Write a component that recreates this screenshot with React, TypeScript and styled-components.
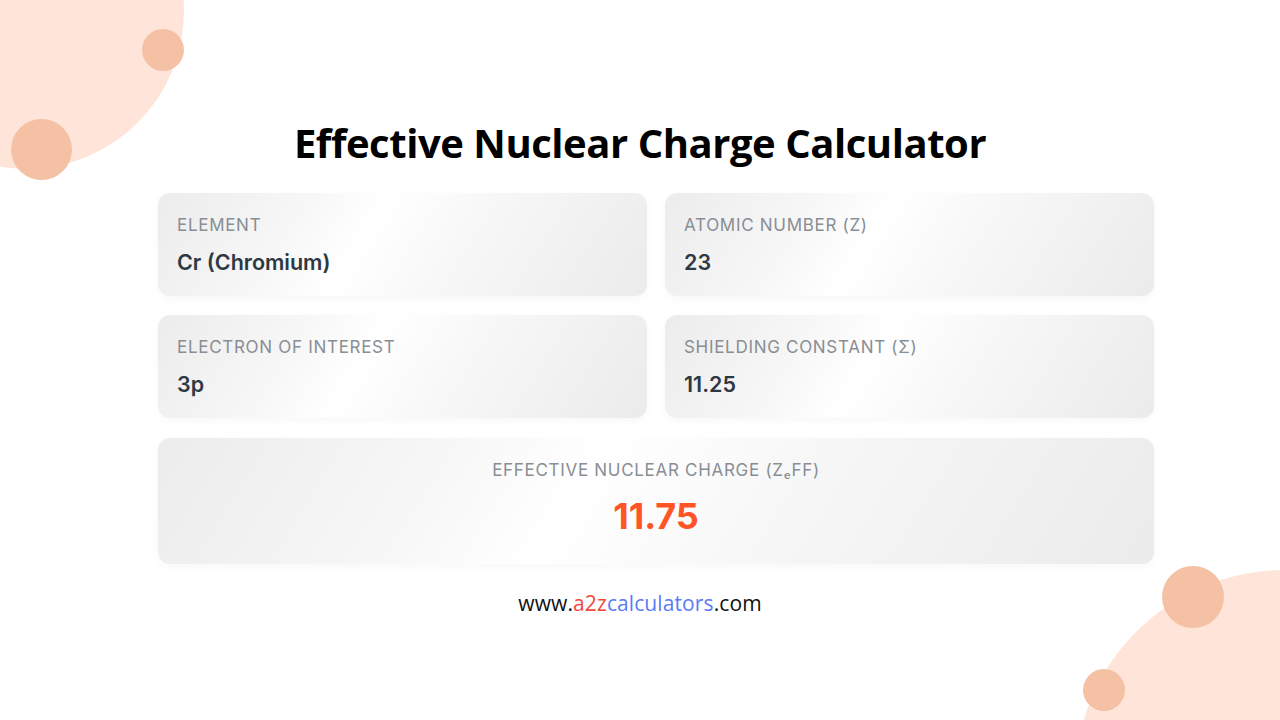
import React from "react";
import styled, { createGlobalStyle } from "styled-components";

const Global = createGlobalStyle`
  html, body { margin: 0; padding: 0; background: #ffffff; }
  body { font-family: Inter, "Noto Sans", sans-serif; }
`;

const Page = styled.div`
  position: relative;
  width: 1280px;
  height: 720px;
  overflow: hidden;
  background: #ffffff;
  display: flex;
  flex-direction: column;
  align-items: center;
  padding-top: 119px;
  box-sizing: border-box;
`;

const Blob = styled.div<{ $cx: number; $cy: number; $r: number; $tone: "pale" | "peach" }>`
  position: absolute;
  left: ${(p) => p.$cx - p.$r}px;
  top: ${(p) => p.$cy - p.$r}px;
  width: ${(p) => p.$r * 2}px;
  height: ${(p) => p.$r * 2}px;
  border-radius: 50%;
  background: ${(p) => (p.$tone === "pale" ? "#fee4d9" : "#f4c1a5")};
  z-index: 0;
`;

const Title = styled.h1`
  position: relative;
  z-index: 1;
  margin: 0;
  font-family: "Open Sans", "Liberation Sans", sans-serif;
  font-weight: 700;
  font-size: 40px;
  line-height: 48px;
  color: #000000;
  letter-spacing: -0.45px;
`;

const Grid = styled.div`
  position: relative;
  z-index: 1;
  margin-top: 26px;
  width: 996px;
  transform: translateX(16px);
  display: grid;
  grid-template-columns: 1fr 1fr;
  column-gap: 18px;
  row-gap: 19px;
`;

const Card = styled.div<{ $wide?: boolean }>`
  grid-column: ${(p) => (p.$wide ? "1 / span 2" : "auto")};
  margin-top: ${(p) => (p.$wide ? "1px" : "0")};
  border-radius: 12px;
  background: linear-gradient(122deg, #ececec 0%, #f7f7f7 28%, #ffffff 42%, #f7f7f7 62%, #ebebeb 100%);
  box-shadow: 0 3px 8px rgba(0, 0, 0, 0.03);
  padding: 22px 19px ${(p) => (p.$wide ? "25px" : "20px")};
  display: flex;
  flex-direction: column;
  align-items: ${(p) => (p.$wide ? "center" : "flex-start")};
  gap: 13px;
`;

const Label = styled.div`
  font-family: Inter, "Noto Sans", "DejaVu Sans", sans-serif;
  font-size: 17px;
  line-height: 20px;
  letter-spacing: 0.7px;
  color: #888e94;
  text-transform: uppercase;
`;

const Value = styled.div`
  font-family: Inter, "Noto Sans", sans-serif;
  font-weight: 600;
  font-size: 21.5px;
  line-height: 28px;
  color: #2e3843;
`;

const Result = styled.div`
  font-family: Inter, "Noto Sans", sans-serif;
  font-weight: 700;
  font-size: 36px;
  line-height: 46px;
  color: #ff5526;
`;

const Footer = styled.div`
  position: relative;
  z-index: 1;
  margin-top: 27px;
  font-family: "Open Sans", "Liberation Sans", sans-serif;
  font-size: 21px;
  line-height: 24px;
  letter-spacing: 0.1px;
  color: #111111;
`;

const Accent = styled.span<{ $c: "red" | "blue" }>`
  color: ${(p) => (p.$c === "red" ? "#f2463b" : "#5b7bf5")};
`;

const fields = [
  { label: "Element", value: "Cr (Chromium)" },
  { label: "Atomic Number (Z)", value: "23" },
  { label: "Electron of Interest", value: "3p" },
  { label: "Shielding Constant (Σ)", value: "11.25" },
];

export default function App() {
  return (
    <Page>
      <Global />
      <Blob $cx={26} $cy={11} $r={158} $tone="pale" />
      <Blob $cx={163} $cy={50} $r={21} $tone="peach" />
      <Blob $cx={41} $cy={149} $r={30.5} $tone="peach" />
      <Blob $cx={1285} $cy={780} $r={210} $tone="pale" />
      <Blob $cx={1193} $cy={597} $r={31} $tone="peach" />
      <Blob $cx={1104} $cy={690} $r={21} $tone="peach" />

      <Title>Effective Nuclear Charge Calculator</Title>

      <Grid>
        {fields.map((f) => (
          <Card key={f.label}>
            <Label>{f.label}</Label>
            <Value>{f.value}</Value>
          </Card>
        ))}
        <Card $wide>
          <Label>Effective Nuclear Charge (Zₑff)</Label>
          <Result>11.75</Result>
        </Card>
      </Grid>

      <Footer>
        www.<Accent $c="red">a2z</Accent>
        <Accent $c="blue">calculators</Accent>.com
      </Footer>
    </Page>
  );
}
